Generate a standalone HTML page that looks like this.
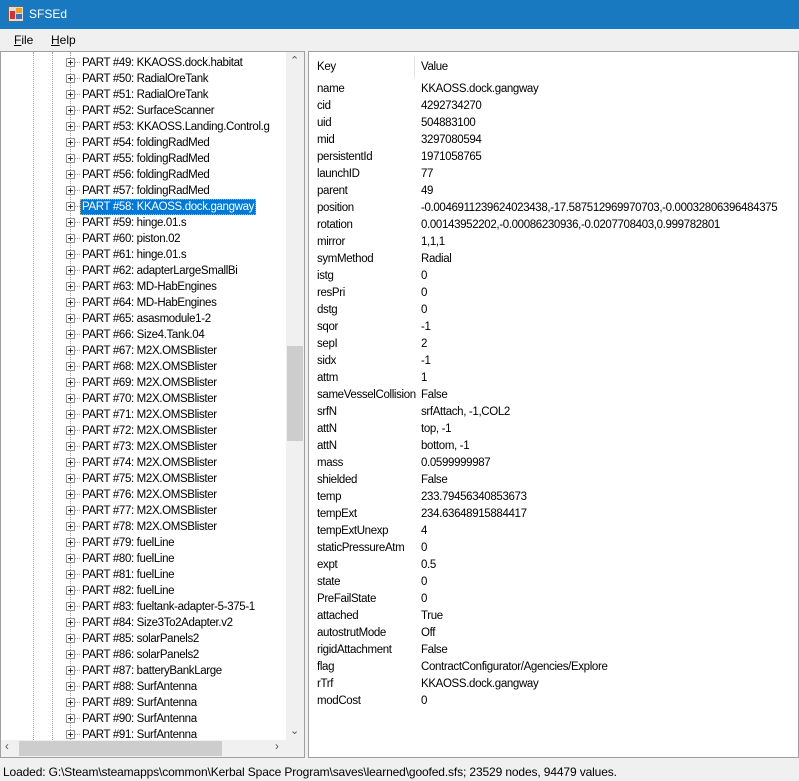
<!DOCTYPE html>
<html><head><style>
*{margin:0;padding:0;box-sizing:border-box}
body{width:799px;height:781px;background:#f0f0f0;font-family:"Liberation Sans",sans-serif;font-size:12px;color:#000;position:relative;overflow:hidden}
.a{position:absolute;white-space:nowrap}
#title{left:0;top:0;width:799px;height:29px;background:#1979c0;color:#fff}
#tree{left:0;top:51px;width:305px;height:707px;background:#fff;border:1px solid #a0a0a0;overflow:hidden;font-size:11.5px;letter-spacing:-0.35px}
#list{left:308px;top:51px;width:491px;height:707px;background:#fff;border:1px solid #a0a0a0;overflow:hidden;font-size:11.5px;letter-spacing:-0.35px}
.r{position:absolute;left:79px;height:16px;line-height:16px;padding:0 2px}
.pb{position:absolute;left:65px;width:9px;height:9px;border:1px solid #919191;background:#fff}
.pb:before{content:"";position:absolute;left:1px;top:3px;width:5px;height:1px;background:#333}
.pb:after{content:"";position:absolute;left:3px;top:1px;width:1px;height:5px;background:#333}
.dh{position:absolute;left:74px;width:5px;border-top:1px dotted #a0a0a0}
.k{position:absolute;left:8px;line-height:17px}
.v{position:absolute;left:112px;line-height:17px}
</style></head><body>
<div id="title" class="a">
<svg class="a" style="left:8px;top:6px" width="16" height="16"><rect x="0.5" y="0.5" width="15" height="15" fill="#ddd" stroke="#666"/><rect x="2" y="5" width="5" height="8" fill="#c33"/><rect x="8" y="2" width="6" height="5" fill="#f0a020"/><rect x="8" y="8" width="6" height="5" fill="#3a6fc0"/></svg>
<span class="a" style="left:29px;top:7px;font-size:12px">SFSEd</span></div>
<span class="a" style="left:14px;top:33px"><u>F</u>ile</span>
<span class="a" style="left:51px;top:33px"><u>H</u>elp</span>
<div id="tree" class="a">
<div class="a" style="left:32px;top:0;height:690px;border-left:1px dotted #a0a0a0"></div>
<div class="a" style="left:51px;top:0;height:690px;border-left:1px dotted #a0a0a0"></div>
<div class="a" style="left:69px;top:0;height:690px;border-left:1px dotted #a0a0a0"></div>
<div id="rows"></div>
<div class="a" style="left:285px;top:0;width:18px;height:688px;background:#f0f0f0"></div>
<span class="a" style="left:289px;top:2px;font-size:11px;color:#555">&#8963;</span>
<span class="a" style="left:289px;top:672px;font-size:11px;color:#555">&#8964;</span>
<div class="a" style="left:286px;top:294px;width:16px;height:95px;background:#cdcdcd"></div>
<div class="a" style="left:0;top:688px;width:303px;height:17px;background:#f0f0f0"></div>
<div class="a" style="left:18px;top:689px;width:203px;height:15px;background:#cdcdcd"></div>
<span class="a" style="left:4px;top:689px;color:#555">&lsaquo;</span>
<span class="a" style="left:274px;top:689px;color:#555">&rsaquo;</span>
<div class="a" style="left:285px;top:688px;width:18px;height:17px;background:#f0f0f0"></div>
</div>
<div id="list" class="a">
<span class="a" style="left:8px;top:9px">Key</span>
<div class="a" style="left:105px;top:4px;height:22px;border-left:1px solid #e5e5e5"></div>
<span class="a" style="left:112px;top:9px">Value</span>
<div id="kv"></div>
</div>
<span class="a" style="left:3px;top:765px;letter-spacing:-0.13px">Loaded: G:\Steam\steamapps\common\Kerbal Space Program\saves\learned\goofed.sfs; 23529 nodes, 94479 values.</span>
<script>
var n=["KKAOSS.dock.habitat","RadialOreTank","RadialOreTank","SurfaceScanner","KKAOSS.Landing.Control.g","foldingRadMed","foldingRadMed","foldingRadMed","foldingRadMed","KKAOSS.dock.gangway","hinge.01.s","piston.02","hinge.01.s","adapterLargeSmallBi","MD-HabEngines","MD-HabEngines","asasmodule1-2","Size4.Tank.04"];
for(var i=0;i<12;i++)n.push("M2X.OMSBlister");
n=n.concat(["fuelLine","fuelLine","fuelLine","fuelLine","fueltank-adapter-5-375-1","Size3To2Adapter.v2","solarPanels2","solarPanels2","batteryBankLarge","SurfAntenna","SurfAntenna","SurfAntenna","SurfAntenna"]);
var h="";
for(var i=0;i<n.length;i++){var t=3+16*i;var sel=i==9;
h+='<div class="pb" style="top:'+(t+3)+'px"></div><div class="dh" style="top:'+(t+7)+'px"></div>';
h+='<div class="r" style="top:'+t+'px;'+(sel?'background:#0078d7;color:#fff;outline:1px dotted #f0a040;outline-offset:-1px':'')+'">PART #'+(49+i)+': '+n[i]+'</div>';}
document.getElementById("rows").innerHTML=h;
var kv=[["name","KKAOSS.dock.gangway"],["cid","4292734270"],["uid","504883100"],["mid","3297080594"],["persistentId","1971058765"],["launchID","77"],["parent","49"],["position","-0.0046911239624023438,-17.587512969970703,-0.00032806396484375"],["rotation","0.00143952202,-0.00086230936,-0.0207708403,0.999782801"],["mirror","1,1,1"],["symMethod","Radial"],["istg","0"],["resPri","0"],["dstg","0"],["sqor","-1"],["sepI","2"],["sidx","-1"],["attm","1"],["sameVesselCollision","False"],["srfN","srfAttach, -1,COL2"],["attN","top, -1"],["attN","bottom, -1"],["mass","0.0599999987"],["shielded","False"],["temp","233.79456340853673"],["tempExt","234.63648915884417"],["tempExtUnexp","4"],["staticPressureAtm","0"],["expt","0.5"],["state","0"],["PreFailState","0"],["attached","True"],["autostrutMode","Off"],["rigidAttachment","False"],["flag","ContractConfigurator/Agencies/Explore"],["rTrf","KKAOSS.dock.gangway"],["modCost","0"]];
h="";for(var i=0;i<kv.length;i++){var t=29+17*i;h+='<span class="k" style="top:'+t+'px">'+kv[i][0]+'</span><span class="v" style="top:'+t+'px">'+kv[i][1]+'</span>';}
document.getElementById("kv").innerHTML=h;
</script>
</body></html>
